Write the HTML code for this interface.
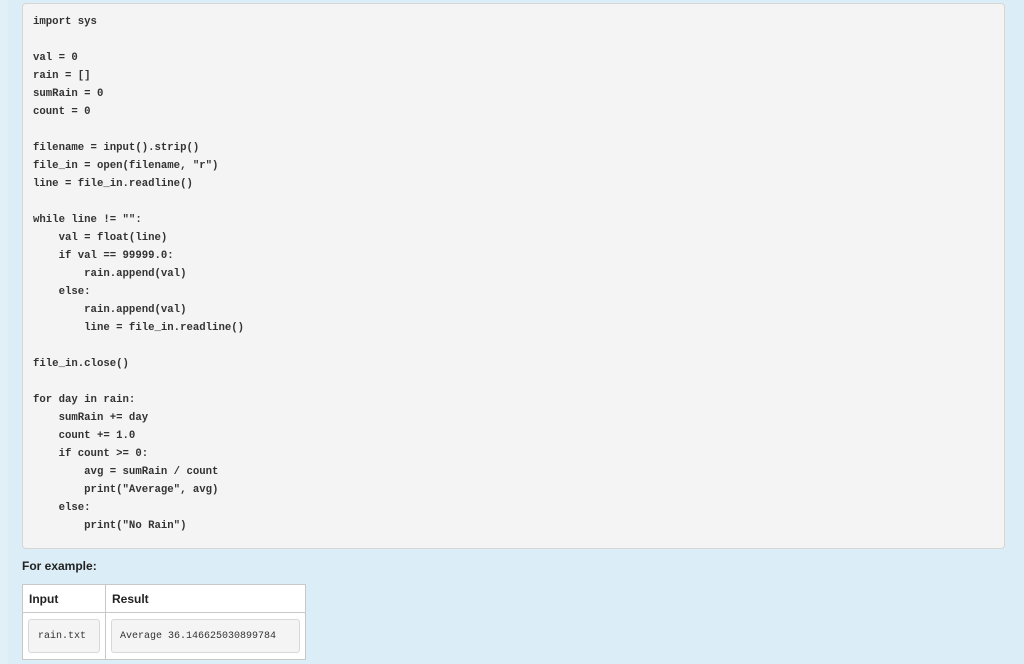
<!DOCTYPE html>
<html><head><meta charset="utf-8"><style>
html,body{margin:0;padding:0;width:1024px;height:664px;overflow:hidden;background:#dbedf6;}
.strip{position:absolute;left:0;top:0;width:8px;height:664px;background:#e1f0f7;}
pre.code{position:absolute;left:22px;top:3px;width:983px;height:546px;box-sizing:border-box;margin:0;
 background:#f4f4f4;border:1px solid #d6d6d6;border-radius:4px;padding:9px 0 0 10px;
 font-family:"Liberation Mono",monospace;font-size:10.67px;line-height:18px;color:#333;font-weight:bold;}
.fe{position:absolute;left:22px;top:559px;font:bold 12px "Liberation Sans",sans-serif;color:#222;}
table{position:absolute;left:22px;top:584px;border-collapse:collapse;background:#fff;}
td,th{border:1px solid #c8c8c8;padding:0;}
th{height:27px;text-align:left;font:bold 12px "Liberation Sans",sans-serif;color:#222;padding-left:6px;}
td{height:46px;padding:0 5px;}
.cell{background:#f4f4f4;border:1px solid #d8d8d8;border-radius:3px;height:34px;box-sizing:border-box;
 font-family:"Liberation Mono",monospace;font-size:10px;color:#333;line-height:34px;padding:0 9px;}
</style></head><body>
<div class="strip"></div>
<pre class="code">import sys

val = 0
rain = []
sumRain = 0
count = 0

filename = input().strip()
file_in = open(filename, "r")
line = file_in.readline()

while line != "":
    val = float(line)
    if val == 99999.0:
        rain.append(val)
    else:
        rain.append(val)
        line = file_in.readline()

file_in.close()

for day in rain:
    sumRain += day
    count += 1.0
    if count >= 0:
        avg = sumRain / count
        print("Average", avg)
    else:
        print("No Rain")</pre>
<div class="fe">For example:</div>
<table>
<tr><th style="width:76px">Input</th><th style="width:193px">Result</th></tr>
<tr><td><div class="cell">rain.txt</div></td><td><div class="cell" style="padding-left:8px">Average 36.146625030899784</div></td></tr>
</table>
</body></html>
